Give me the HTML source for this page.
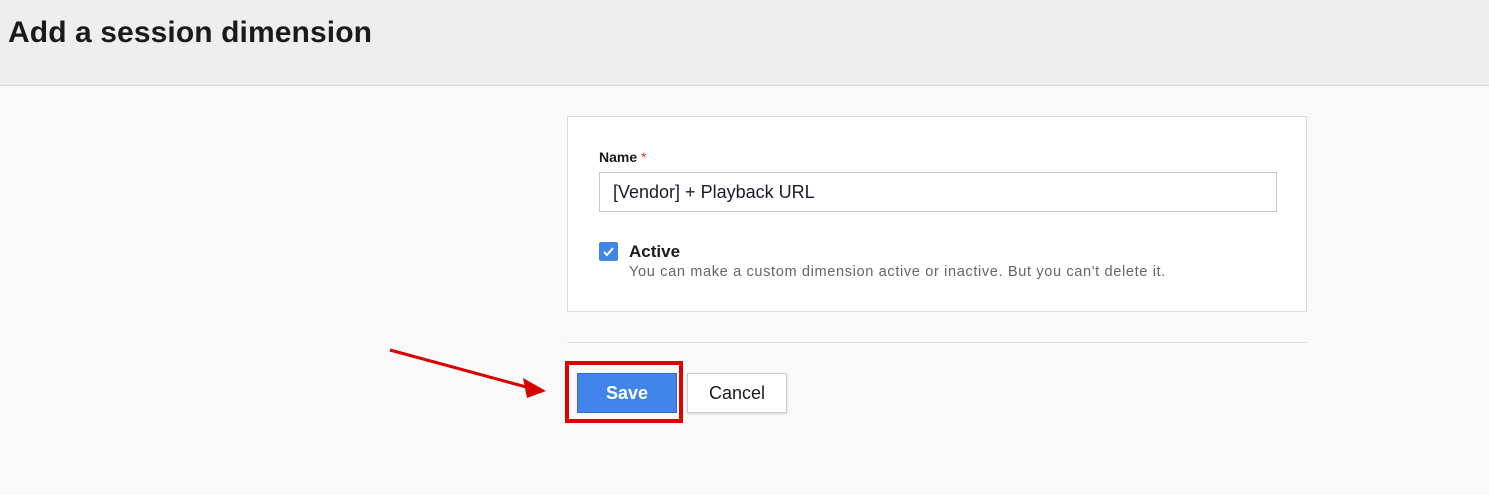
<!DOCTYPE html>
<html><head><style>
*{margin:0;padding:0;box-sizing:border-box}
body{width:1489px;height:495px;background:#f9f9f9;font-family:"Liberation Sans",sans-serif;position:relative;overflow:hidden}
.hdr{position:absolute;left:0;top:0;width:1489px;height:86px;background:#eeeeee;border-bottom:1px solid #d6d6d6}
.hdr h1{position:absolute;left:8px;top:16px;font-size:30px;font-weight:bold;color:#1a1a1a;letter-spacing:0.1px}
.card{position:absolute;left:567px;top:116px;width:740px;height:196px;background:#fff;border:1px solid #dcdcdc}
.lbl{position:absolute;left:31px;top:32px;font-size:14px;font-weight:bold;color:#1a1a1a}
.lbl span{color:#d33;font-weight:normal}
.inp{position:absolute;left:31px;top:55px;width:678px;height:40px;border:1px solid #c8c8c8;font-size:18px;color:#1a1a2a;padding:9px 13px}
.cb{position:absolute;left:31px;top:125px;width:19px;height:19px;background:#3f86e8;border-radius:2px}
.act{position:absolute;left:61px;top:125px;font-size:17px;font-weight:bold;color:#1a1a1a}
.desc{position:absolute;left:61px;top:147px;font-size:14.6px;color:#666;letter-spacing:0.62px}
.hr{position:absolute;left:567px;top:342px;width:740px;height:1px;background:#dcdcdc}
.redbox{position:absolute;left:565px;top:361px;width:118px;height:62px;border:4px solid #e00000}
.save{position:absolute;left:577px;top:373px;width:100px;height:40px;background:#4285ea;border:1px solid #2f6bc8;color:#fff;font-weight:bold;font-size:18px;text-align:center;line-height:38px}
.cancel{position:absolute;left:687px;top:373px;width:100px;height:40px;background:#fff;border:1px solid #ccc;color:#1a1a1a;font-size:18px;text-align:center;line-height:38px;box-shadow:0 1px 2px rgba(0,0,0,.15)}
</style></head><body>
<div class="hdr"><h1>Add a session dimension</h1></div>
<div class="card">
<div class="lbl">Name <span>*</span></div>
<div class="inp">[Vendor] + Playback URL</div>
<div class="cb"><svg width="19" height="19" viewBox="0 0 19 19"><path d="M5 10l3 3 6-7" stroke="#fff" stroke-width="2" fill="none"/></svg></div>
<div class="act">Active</div>
<div class="desc">You can make a custom dimension active or inactive. But you can't delete it.</div>
</div>
<div class="hr"></div>
<svg style="position:absolute;left:0;top:0" width="1489" height="495">
<path d="M390 350 L530 388" stroke="#d80000" stroke-width="3"/>
<path d="M546 391 L523 378 L527 398 Z" fill="#d80000"/>
</svg>
<div class="redbox"></div>
<div class="save">Save</div>
<div class="cancel">Cancel</div>
</body></html>
